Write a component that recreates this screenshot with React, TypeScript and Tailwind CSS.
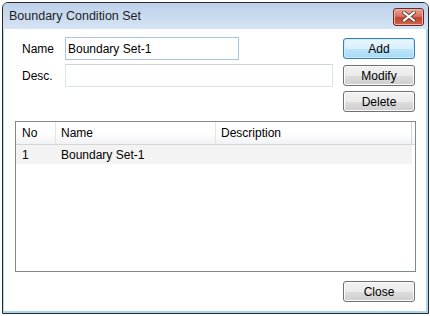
import React from "react";

const font = { fontFamily: '"Liberation Sans", Arial, sans-serif' };

const WinButton = ({ label, isDefault = false }: { label: string; isDefault?: boolean }) => (
  <button
    className={`w-[72px] h-[21px] rounded-[3px] border text-[12px] text-black flex items-center justify-center ${
      isDefault
        ? "border-[#3c7fb1] bg-[linear-gradient(to_bottom,#eaf6fd_0%,#d9f0fc_50%,#bee6fd_51%,#a7d9f5_100%)] shadow-[inset_0_0_0_1px_#c8ecfc]"
        : "border-[#707070] bg-[linear-gradient(to_bottom,#f2f2f2_0%,#ebebeb_50%,#dddddd_51%,#cfcfcf_100%)] shadow-[inset_0_0_0_1px_#fcfcfc]"
    }`}
  >
    {label}
  </button>
);

const CloseX = () => (
  <div className="w-[31px] h-[18px] rounded-[3px] border border-[#6a2a22] bg-[linear-gradient(to_bottom,#e8a493_0%,#d9735f_45%,#c0432c_55%,#d0654f_100%)] shadow-[inset_0_0_0_1px_#eeb3a6] flex items-center justify-center">
    <svg width="14" height="11" viewBox="0 0 14 11">
      <path d="M2 1.5 L12 9.5 M12 1.5 L2 9.5" stroke="#5a3a36" strokeWidth="3.6" strokeLinecap="square" />
      <path d="M2 1.5 L12 9.5 M12 1.5 L2 9.5" stroke="#ffffff" strokeWidth="2" strokeLinecap="square" />
    </svg>
  </div>
);

export default function App() {
  return (
    <div className="w-[430px] h-[316px] bg-white pt-[2px] pl-[2px]" style={font}>
      <div className="w-[427px] h-[312px] border border-[#2a2a2a] rounded-t-[6px] flex flex-col bg-[#c9dbef] overflow-hidden">
        {/* title bar */}
        <div className="h-[26px] shrink-0 flex items-center justify-between pl-[6px] pr-[4px] bg-[linear-gradient(to_bottom,#bcd1ea_0%,#c8daef_50%,#d6e4f4_100%)]">
          <span className="text-[12.5px] text-[#1e1e1e] pt-[1px]">Boundary Condition Set</span>
          <div className="pt-[1px]">
            <CloseX />
          </div>
        </div>

        {/* body */}
        <div className="flex-1 bg-white border-l border-r-2 border-b-2 border-[#a6d8f2] flex flex-col">
          <div className="flex justify-between pr-[11px]">
            <div className="flex flex-col gap-[4px] pt-[8px] pl-[18px]">
              <div className="flex items-center">
                <span className="w-[43px] text-[12px] text-black">Name</span>
                <div className="w-[174px] h-[23px] border border-[#a7c4e4] bg-white flex items-center px-[2px] text-[12px] text-black">
                  Boundary Set-1
                </div>
              </div>
              <div className="flex items-center">
                <span className="w-[43px] text-[12px] text-black">Desc.</span>
                <div className="w-[268px] h-[23px] border border-[#dde3ea] border-t-[#cfd5dc] bg-white" />
              </div>
            </div>
            <div className="flex flex-col pt-[9px]">
              <WinButton label="Add" isDefault />
              <div className="mt-[6px]">
                <WinButton label="Modify" />
              </div>
              <div className="mt-[5px]">
                <WinButton label="Delete" />
              </div>
            </div>
          </div>

          {/* list */}
          <div className="ml-[11px] mt-[9px] w-[401px] h-[151px] border border-[#828790] bg-white text-[12px] text-black">
            <div className="flex h-[23px] border-b border-[#d5d5d5] bg-[linear-gradient(to_bottom,#ffffff_0%,#ffffff_50%,#f1f2f4_100%)]">
              <div className="w-[40px] pl-[6px] flex items-center border-r border-[#e3e4e6]">No</div>
              <div className="w-[160px] pl-[5px] flex items-center border-r border-[#e3e4e6]">Name</div>
              <div className="w-[196px] pl-[5px] flex items-center border-r border-[#d5d5d5]">Description</div>
            </div>
            <div className="flex h-[19px] w-[396px] bg-[#f3f3f3] items-center">
              <div className="w-[40px] pl-[6px]">1</div>
              <div className="w-[160px] pl-[5px]">Boundary Set-1</div>
              <div className="w-[196px]" />
            </div>
          </div>

          <div className="flex justify-end pr-[11px] mt-[9px]">
            <WinButton label="Close" />
          </div>
        </div>
      </div>
    </div>
  );
}
